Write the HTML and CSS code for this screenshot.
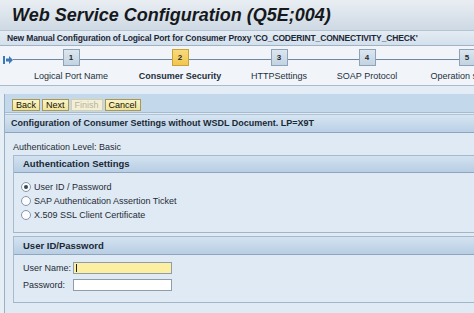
FILE: index.html
```html
<!DOCTYPE html>
<html lang="en">
<head>
    <meta charset="UTF-8">
    <title>Web Service Configuration (Q5E;004)</title>
    <link rel="stylesheet" href="styles.css">
</head>
<body>
    <div class="page">
        <!-- Title -->
        <div class="title">Web Service Configuration (Q5E;004)</div>
        <div class="subtitle">New Manual Configuration of Logical Port for Consumer Proxy 'CO_CODERINT_CONNECTIVITY_CHECK'</div>

        <!-- Roadmap -->
        <div class="roadmap">
            <div class="start">
                <svg width="10" height="8" viewBox="0 0 10 8">
                    <rect x="0" y="0" width="2" height="8" fill="#3b79b8"/>
                    <path d="M3 2.5 H6 V0 L10 4 L6 8 V5.5 H3 Z" fill="#3b79b8"/>
                </svg>
            </div>
            <div class="step s1"><div class="num">1</div><div class="label">Logical Port Name</div></div>
            <div class="step s2 active"><div class="num">2</div><div class="label">Consumer Security</div></div>
            <div class="step s3"><div class="num">3</div><div class="label">HTTPSettings</div></div>
            <div class="step s4"><div class="num">4</div><div class="label">SOAP Protocol</div></div>
            <div class="step s5"><div class="num">5</div><div class="label">Operation settings</div></div>
        </div>
        <div class="spacer"></div>

        <div class="main">
            <div class="toolbar">
                <button class="btn">Back</button>
                <button class="btn">Next</button>
                <button class="btn" disabled>Finish</button>
                <button class="btn">Cancel</button>
            </div>
            <div class="section-head">Configuration of Consumer Settings without WSDL Document. LP=X9T</div>

            <div class="content">
                <div class="auth-level">Authentication Level: Basic</div>

                <div class="panel">
                    <div class="panel-head">Authentication Settings</div>
                    <div class="panel-body radios">
                        <label class="radio"><span class="dot checked"></span>User ID / Password</label>
                        <label class="radio"><span class="dot"></span>SAP Authentication Assertion Ticket</label>
                        <label class="radio"><span class="dot"></span>X.509 SSL Client Certificate</label>
                    </div>
                </div>

                <div class="panel">
                    <div class="panel-head tall">User ID/Password</div>
                    <div class="panel-body fields">
                        <div class="field">
                            <span class="field-label">User Name:</span>
                            <span class="input focus"><span class="caret"></span></span>
                        </div>
                        <div class="field">
                            <span class="field-label">Password:</span>
                            <span class="input"></span>
                        </div>
                    </div>
                </div>
            </div>
        </div>
    </div>
</body>
</html>
```

FILE: styles.css
```css
body {
    margin: 0;
    background-color: #e7eff6;
    overflow: hidden;
    font-family: "Liberation Sans", Arial, sans-serif;
    font-size: 9px;
    color: #1f2a35;
}
.page {
    width: 560px;
}

/* Title area */
.title {
    height: 30px;
    line-height: 30px;
    padding-left: 12px;
    font-size: 18px;
    font-weight: bold;
    font-style: italic;
    color: #15181c;
    background: linear-gradient(#e9eef3, #ced9e4);
    border-bottom: 1px solid #b5c4d2;
    white-space: nowrap;
}
.subtitle {
    height: 14px;
    line-height: 14px;
    padding-left: 7px;
    font-weight: bold;
    font-size: 8.5px;
    letter-spacing: -0.15px;
    color: #1d2836;
    background: linear-gradient(#e4ecf3, #d3e0ec);
    border-bottom: 1px solid #9fb3c6;
    white-space: nowrap;
}

/* Roadmap */
.roadmap {
    display: flex;
    height: 39px;
    background-color: #f1f5f9;
    background-image: linear-gradient(#6f889e, #6f889e);
    background-repeat: no-repeat;
    background-position: 12px 13px;
    background-size: 100% 1px;
    border-bottom: 1px solid #aabccc;
}
.start {
    flex-shrink: 0;
    width: 10px;
    padding: 10px 0 0 3px;
    background: #f1f5f9;
    height: 8px;
}
.step {
    flex-shrink: 0;
    width: 80px;
    display: flex;
    flex-direction: column;
    align-items: center;
    padding-top: 3px;
    white-space: nowrap;
}
.s1 { margin-left: 18px; }
.s2 { margin-left: 29px; }
.s3 { margin-left: 19px; }
.s4 { margin-left: 8px; }
.s5 { margin-left: 20px; }
.num {
    width: 15px;
    height: 15px;
    line-height: 15px;
    text-align: center;
    font-weight: bold;
    font-size: 8px;
    background: linear-gradient(#dbe6ef, #c3d3e2);
    border: 1px solid #8ea3b7;
}
.active .num {
    background: linear-gradient(#f9da7a, #f1c650);
    border-color: #c9a338;
}
.label {
    margin-top: 5px;
    font-size: 9px;
    color: #24303c;
}
.active .label {
    font-weight: bold;
}

.spacer {
    height: 8px;
    background-color: #e4edf5;
}

/* Main area */
.main {
    margin-left: 4px;
    border-left: 1px solid #9bb0c3;
    background-color: #dfeaf4;
}
.toolbar {
    height: 19px;
    display: flex;
    gap: 2px;
    padding: 5px 0 0 7px;
    box-sizing: border-box;
    background-color: #c4d8eb;
    border-bottom: 1px solid #a5bbd0;
}
.btn {
    height: 12px;
    padding: 0 3px;
    font-family: inherit;
    font-size: 9px;
    line-height: 10px;
    color: #111108;
    background: linear-gradient(#fbf3c4, #f1e39a);
    border: 1px solid #a89852;
    border-radius: 0;
}
.btn:disabled {
    color: #b5b3a4;
    background: #f4efd4;
    border-color: #d6cfa8;
}
.section-head {
    margin-top: 1px;
    height: 17px;
    line-height: 17px;
    padding-left: 6px;
    font-weight: bold;
    font-size: 9px;
    color: #1b2835;
    background: linear-gradient(#d6e5f2, #bad0e5);
    border-top: 1px solid #b2c4d4;
    border-bottom: 1px solid #8ea6bb;
}

.content {
    padding: 7px 0 10px 8px;
}
.auth-level {
    height: 14px;
    line-height: 14px;
    margin-bottom: 1px;
}

.panel {
    margin-bottom: 3px;
    border-left: 1px solid #a9bccd;
    border-bottom: 1px solid #a2b5c7;
}
.panel-head {
    height: 16px;
    line-height: 16px;
    padding-left: 9px;
    font-weight: bold;
    font-size: 9.5px;
    color: #1b2835;
    background: linear-gradient(#d3e2f0, #b8cee4);
    border-top: 1px solid #a6bacd;
    border-bottom: 1px solid #8fa6bc;
}
.panel-head.tall {
    height: 17px;
    line-height: 17px;
}
.panel-body {
    background-color: #dfeaf4;
}
.radios {
    display: flex;
    flex-direction: column;
    gap: 3px;
    padding: 8px 0 12px 7px;
}
.radio {
    display: flex;
    align-items: center;
    gap: 3px;
    height: 11px;
    font-size: 9px;
}
.dot {
    width: 8px;
    height: 8px;
    border-radius: 50%;
    border: 1px solid #8797a8;
    background: #fafcfd;
    position: relative;
}
.dot.checked::after {
    content: "";
    position: absolute;
    left: 2px;
    top: 2px;
    width: 4px;
    height: 4px;
    border-radius: 50%;
    background: #3a4652;
}
.fields {
    display: flex;
    flex-direction: column;
    gap: 5px;
    padding: 7px 0 11px 9px;
}
.field {
    display: flex;
    align-items: center;
    height: 12px;
}
.field-label {
    width: 50px;
}
.input {
    width: 97px;
    height: 10px;
    border: 1px solid #8e9cab;
    background: #ffffff;
    position: relative;
}
.input.focus {
    background: #fcefa2;
}
.caret {
    position: absolute;
    left: 2px;
    top: 1px;
    width: 1px;
    height: 8px;
    background: #222;
}
```
